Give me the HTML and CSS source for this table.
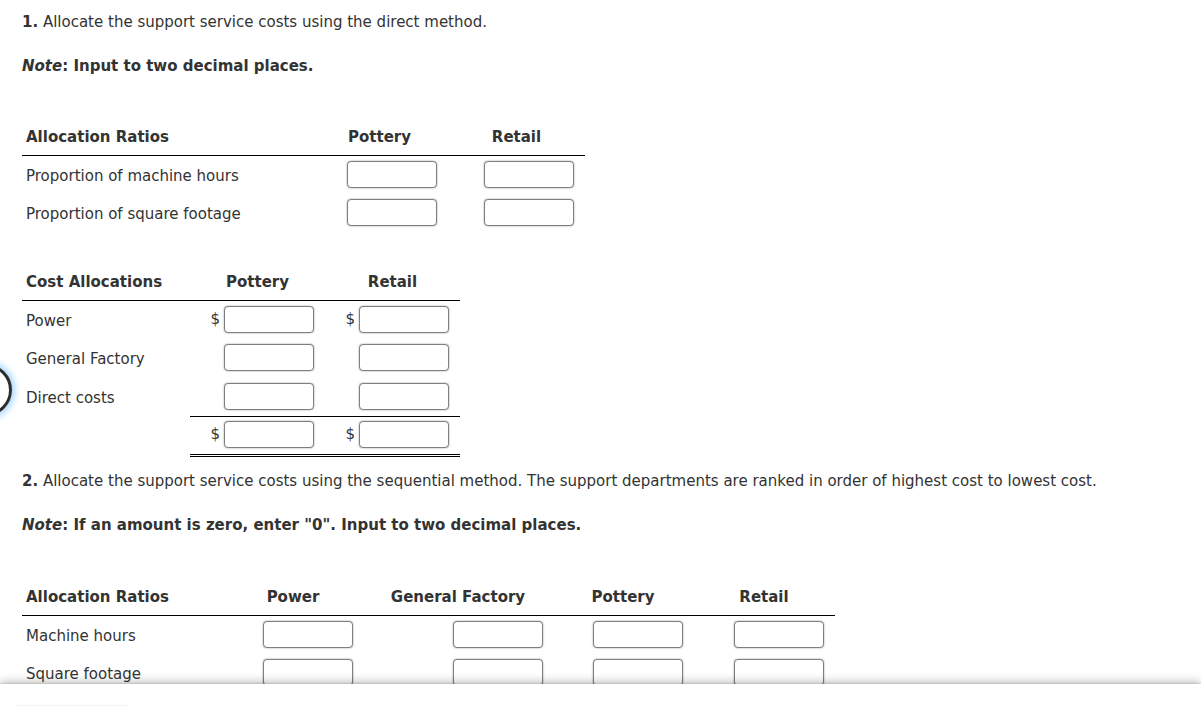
FILE: index.html
```html
<!DOCTYPE html>
<html>
<head>
<meta charset="utf-8">
<link rel="stylesheet" href="styles.css">
</head>
<body>
<div class="focus-ring"></div>
<div class="page">
  <p class="q"><b>1.</b> Allocate the support service costs using the direct method.</p>
  <p class="note"><b><i>Note</i>: Input to two decimal places.</b></p>

  <table class="t t1">
    <colgroup><col class="c1a"><col class="c137"><col class="c137"></colgroup>
    <tr class="hdr"><th class="lab">Allocation Ratios</th><th>Pottery</th><th>Retail</th></tr>
    <tr><td class="lab">Proportion of machine hours</td><td class="in"><input type="text"></td><td class="in"><input type="text"></td></tr>
    <tr><td class="lab">Proportion of square footage</td><td class="in"><input type="text"></td><td class="in"><input type="text"></td></tr>
  </table>

  <table class="t t2">
    <colgroup><col class="c2a"><col class="c135"><col class="c135"></colgroup>
    <tr class="hdr"><th class="lab">Cost Allocations</th><th>Pottery</th><th>Retail</th></tr>
    <tr><td class="lab">Power</td><td class="in"><span class="cur">$</span><input type="text"></td><td class="in"><span class="cur">$</span><input type="text"></td></tr>
    <tr><td class="lab">General Factory</td><td class="in"><input type="text"></td><td class="in"><input type="text"></td></tr>
    <tr class="sub"><td class="lab">Direct costs</td><td class="in rule"><input type="text"></td><td class="in rule"><input type="text"></td></tr>
    <tr class="tot"><td class="lab"></td><td class="in dbl"><span class="cur">$</span><input type="text"></td><td class="in dbl"><span class="cur">$</span><input type="text"></td></tr>
  </table>

  <p class="q q2"><b>2.</b> Allocate the support service costs using the sequential method. The support departments are ranked in order of highest cost to lowest cost.</p>
  <p class="note"><b><i>Note</i>: If an amount is zero, enter "0". Input to two decimal places.</b></p>

  <table class="t t3">
    <colgroup><col class="c3a"><col class="c140"><col class="c190"><col class="c140"><col class="c142"></colgroup>
    <tr class="hdr"><th class="lab">Allocation Ratios</th><th>Power</th><th>General Factory</th><th>Pottery</th><th>Retail</th></tr>
    <tr><td class="lab">Machine hours</td><td class="in"><input type="text"></td><td class="in"><input type="text"></td><td class="in"><input type="text"></td><td class="in"><input type="text"></td></tr>
    <tr><td class="lab">Square footage</td><td class="in"><input type="text"></td><td class="in"><input type="text"></td><td class="in"><input type="text"></td><td class="in"><input type="text"></td></tr>
  </table>
</div>
<div class="footer"><div class="footer-btn"></div></div>
</body>
</html>
```

FILE: styles.css
```css
html, body {
  margin: 0;
  padding: 0;
  background: #fff;
}
body {
  font-family: "DejaVu Sans", Verdana, sans-serif;
  font-size: 15px;
  color: #333;
  overflow: hidden;
  height: 707px;
}
.page {
  padding: 14px 0 0 22px;
}
p {
  margin: 0;
  line-height: 17px;
}
.note {
  margin-top: 27px;
}
.q2 {
  margin-top: 16px;
}
.t {
  border-collapse: separate;
  border-spacing: 0;
  table-layout: fixed;
}
.t1 { width: 563px; margin-top: 54px; }
.t2 { width: 438px; margin-top: 42px; }
.t3 { width: 813px; margin-top: 55px; }
.c1a { width: 289px; }
.c137 { width: 137px; }
.c2a { width: 168px; }
.c135 { width: 135px; }
.c3a { width: 201px; }
.c140 { width: 140px; }
.c190 { width: 190px; }
.c142 { width: 142px; }

th, td {
  padding: 0;
  line-height: 17px;
}
.hdr th {
  font-weight: bold;
  text-align: center;
  padding: 0 0 9px 0;
  border-bottom: 1px solid #000;
  white-space: nowrap;
}
.hdr th.lab {
  text-align: left;
  padding-left: 4px;
}
td.lab {
  padding: 2px 0 0 4px;
  vertical-align: middle;
  white-space: nowrap;
}
td.in {
  text-align: right;
  padding: 5px 11px 6px 0;
  white-space: nowrap;
  vertical-align: top;
}
.t3 td.in { padding-right: 10px; }
.t3 td.in:last-child { padding-right: 11px; }
.sub td.in {
  padding-top: 6px;
}
td.rule {
  border-bottom: 1px solid #000;
}
.tot td.in {
  padding-top: 4px;
  padding-bottom: 6px;
}
td.dbl {
  border-bottom: 3px double #000;
}
.cur {
  display: inline-block;
  vertical-align: top;
  line-height: 27px;
  margin-right: 4px;
  color: #333;
}
input {
  box-sizing: border-box;
  width: 90px;
  height: 27px;
  margin: 0;
  border: 1px solid #7f7f7f;
  border-radius: 4px;
  box-shadow: 0 0 2px rgba(0, 0, 0, 0.4);
  background: #fff;
  vertical-align: top;
  font: inherit;
}
.focus-ring {
  position: absolute;
  left: -40px;
  top: 364px;
  width: 46px;
  height: 46px;
  border: 3px solid #2d2d2d;
  border-radius: 50%;
  box-shadow: 0 0 6px 3px rgba(90, 180, 255, 0.55);
  background: transparent;
}
.footer {
  position: fixed;
  left: 0;
  right: 0;
  bottom: 0;
  height: 23px;
  background: #fff;
  box-shadow: 0 -3px 9px rgba(0, 0, 0, 0.22), 0 -1px 2px rgba(0, 0, 0, 0.12);
}
.footer-btn {
  position: absolute;
  left: 15px;
  top: 21px;
  width: 112px;
  height: 4px;
  border-top: 1px solid #f2f2f2;
}
```
